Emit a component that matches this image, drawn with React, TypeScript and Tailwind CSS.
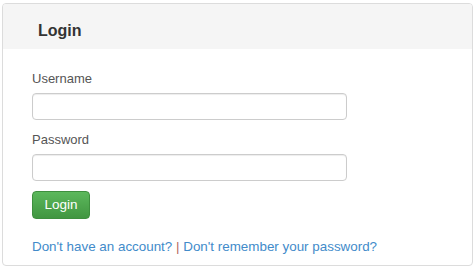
import React from "react";

export default function App() {
  return (
    <div className="w-[474px] h-[268px] bg-white pt-[3px] pl-[2px]" style={{ fontFamily: '"Liberation Sans", Arial, sans-serif' }}>
      <div className="w-[471px] h-[263px] border border-[#dcdcdc] rounded-[4px] overflow-hidden bg-white">
        <div className="h-[45px] bg-[#f5f5f5] pt-[17px] pl-[35px]">
          <div className="text-[16px] leading-[20px] font-bold text-[#333]">Login</div>
        </div>
        <div className="pt-[21px] pl-[29px]">
          <div className="text-[13px] leading-[18px] text-[#555] mb-[5px]">Username</div>
          <input className="block w-[315px] h-[27px] border border-[#ccc] rounded-[4px] shadow-[inset_0_1px_1px_rgba(0,0,0,0.075)] bg-white outline-none" />
          <div className="text-[13px] leading-[18px] text-[#555] mt-[11px] mb-[5px]">Password</div>
          <input type="password" className="block w-[315px] h-[27px] border border-[#ccc] rounded-[4px] shadow-[inset_0_1px_1px_rgba(0,0,0,0.075)] bg-white outline-none" />
          <button className="mt-[10px] w-[58px] h-[28px] rounded-[4px] border border-[#3e8f3e] bg-gradient-to-b from-[#5cb85c] to-[#419641] text-white text-[13.5px] leading-[18px] flex items-center justify-center">
            Login
          </button>
          <div className="mt-[19px] text-[13.4px] leading-[18px] text-[#428bca]">
            <span>Don't have an account?</span>
            <span className="text-[#b5655c]"> | </span>
            <span>Don't remember your password?</span>
          </div>
        </div>
      </div>
    </div>
  );
}
